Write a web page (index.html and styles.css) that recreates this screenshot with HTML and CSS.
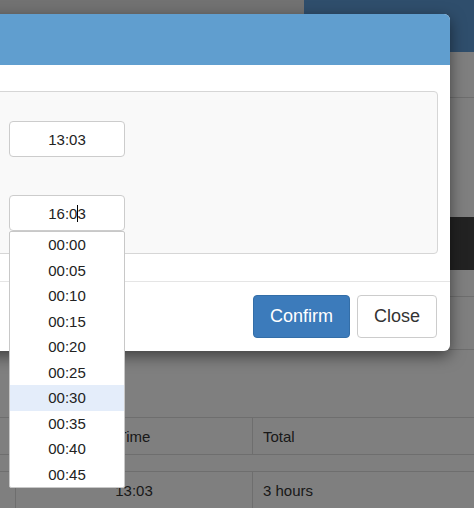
FILE: index.html
```html
<!DOCTYPE html>
<html lang="en">
<head>
<meta charset="utf-8">
<title>Time picker</title>
<link rel="stylesheet" href="styles.css">
</head>
<body>
<div class="page">
  <header class="topbar">
    <div class="topbar-left"></div>
    <div class="topbar-right"></div>
  </header>
  <div class="subbar"></div>
  <div class="spacer-a"></div>
  <div class="darkband"></div>
  <div class="strip-a"></div>
  <div class="strip-b"></div>
  <div class="spacer-b"></div>
  <div class="table">
    <div class="trow head">
      <div class="cell"></div>
      <div class="cell center">Time</div>
      <div class="cell last">Total</div>
    </div>
    <div class="trow thin"></div>
    <div class="trow data">
      <div class="cell"></div>
      <div class="cell center">13:03</div>
      <div class="cell last">3 hours</div>
    </div>
  </div>

  <div class="backdrop"></div>

  <div class="modal">
    <div class="modal-header"></div>
    <div class="modal-body">
      <div class="well">
        <div class="field">
          <div class="input">13:03</div>
        </div>
        <div class="field">
          <div class="input">16:0<span class="caret"></span>3</div>
          <ul class="dropdown">
            <li>00:00</li>
            <li>00:05</li>
            <li>00:10</li>
            <li>00:15</li>
            <li>00:20</li>
            <li>00:25</li>
            <li class="active">00:30</li>
            <li>00:35</li>
            <li>00:40</li>
            <li>00:45</li>
          </ul>
        </div>
      </div>
    </div>
    <div class="modal-footer">
      <button class="btn btn-primary">Confirm</button>
      <button class="btn btn-default">Close</button>
    </div>
  </div>
</div>
</body>
</html>
```

FILE: styles.css
```css
* { box-sizing: border-box; }

html, body {
  margin: 0;
  padding: 0;
}

body {
  font-family: "Liberation Sans", Arial, sans-serif;
  color: #333;
  background: #fff;
}

.page {
  position: relative;
  width: 474px;
  height: 508px;
  overflow: hidden;
  background: #fff;
}

/* ---------- page behind the modal ---------- */
.topbar {
  display: flex;
  height: 52px;
}
.topbar-left {
  flex: 0 0 304px;
  background: #e4e4e4;
}
.topbar-right {
  flex: 1;
  background: #5e9dd8;
}

.subbar {
  height: 46px;
  border-bottom: 1px solid #ddd;
}
.spacer-a { height: 119px; }
.darkband {
  height: 53px;
  background: #444;
}
.strip-a {
  height: 27px;
  border-bottom: 1px solid #ddd;
}
.strip-b {
  height: 53px;
  border-bottom: 1px solid #ddd;
}
.spacer-b { height: 67px; }

.table {
  border-top: 1px solid #ddd;
  font-size: 15px;
  color: #333;
}
.trow {
  display: grid;
  grid-template-columns: 16px 237px 1fr;
  border-bottom: 1px solid #ddd;
}
.trow.head { height: 37px; }
.trow.thin { height: 17px; display: block; }
.trow.data { height: 38px; }

.cell {
  display: flex;
  align-items: center;
  border-right: 1px solid #ddd;
}
.cell.center { justify-content: center; }
.cell.last {
  border-right: 0;
  padding-left: 10px;
}

.backdrop {
  position: absolute;
  inset: 0;
  background: rgba(0, 0, 0, 0.5);
}

/* ---------- modal ---------- */
.modal {
  position: absolute;
  left: -188px;
  top: 14px;
  width: 638px;
  background: #fff;
  border-radius: 6px;
  box-shadow: 0 5px 15px rgba(0, 0, 0, 0.5);
}

.modal-header {
  height: 51px;
  background: #609ecf;
  border-radius: 6px 6px 0 0;
}

.modal-body {
  padding: 26px 12px 27px 12px;
}

.well {
  height: 163px;
  padding: 29px 0 0 184px;
  background: #f9f9f9;
  border: 1px solid #d6d6d6;
  border-radius: 4px;
}

.field {
  position: relative;
  width: 116px;
}
.field + .field { margin-top: 38px; }

.input {
  height: 36px;
  display: flex;
  align-items: center;
  justify-content: center;
  background: #fff;
  border: 1px solid #ccc;
  border-radius: 4px;
  font-size: 15px;
  color: #222;
}

.caret {
  display: inline-block;
  width: 1px;
  height: 17px;
  margin-right: -1px;
  background: #000;
  vertical-align: middle;
}

.dropdown {
  position: absolute;
  left: 0;
  top: 100%;
  width: 116px;
  margin: 0;
  padding: 0;
  list-style: none;
  background: #fff;
  border: 1px solid #c8c8c8;
  border-radius: 2px;
  z-index: 5;
}
.dropdown li {
  height: 25.5px;
  display: flex;
  align-items: center;
  justify-content: center;
  font-size: 15px;
  color: #222;
}
.dropdown li.active { background: #e4edfa; }

.modal-footer {
  display: flex;
  justify-content: flex-end;
  gap: 7px;
  padding: 13px 13px 13px 0;
  border-top: 1px solid #e5e5e5;
}

.btn {
  height: 43px;
  padding: 0 16px;
  border-radius: 4px;
  font-family: "Liberation Sans", Arial, sans-serif;
  font-size: 18px;
  border: 1px solid transparent;
}
.btn-primary {
  background: #3c7bbb;
  border-color: #336ea8;
  color: #fff;
}
.btn-default {
  background: #fff;
  border-color: #ccc;
  color: #333;
}
```
